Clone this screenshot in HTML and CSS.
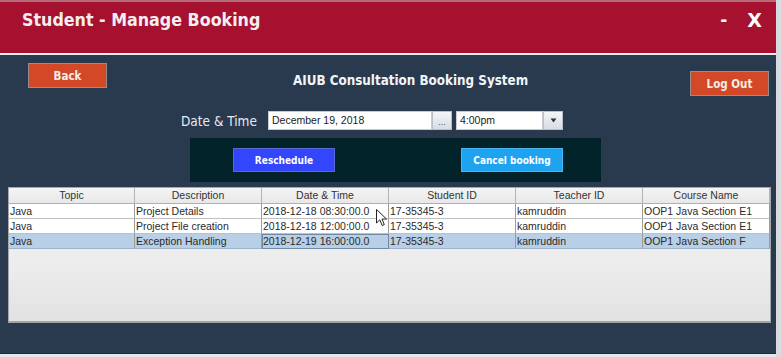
FILE: index.html
```html
<!DOCTYPE html>
<html>
<head>
<meta charset="utf-8">
<link rel="stylesheet" href="styles.css">
</head>
<body>
<div class="window">
  <header class="titlebar">
    <h1 class="app-title">Student - Manage Booking</h1>
    <div class="win-controls">
      <span class="win-min">-</span>
      <span class="win-close">X</span>
    </div>
  </header>
  <main class="content">
    <div class="top-row">
      <button class="btn btn-orange btn-back">Back</button>
      <h2 class="sys-title">AIUB Consultation Booking System</h2>
      <button class="btn btn-orange btn-logout">Log Out</button>
    </div>
    <div class="date-row">
      <label class="date-label">Date &amp; Time</label>
      <div class="field date-field">December 19, 2018</div>
      <div class="mini-btn dots">...</div>
      <div class="field time-field">4:00pm</div>
      <div class="mini-btn arrow">
        <svg width="7" height="5" viewBox="0 0 7 5"><path d="M0.5 0.5 L6.5 0.5 L3.5 4.5 Z" fill="#333"/></svg>
      </div>
    </div>
    <div class="action-panel">
      <button class="btn btn-blue">Reschedule</button>
      <button class="btn btn-sky">Cancel booking</button>
    </div>
    <div class="table-wrap">
      <div class="grid-table">
        <div class="th">Topic</div><div class="th">Description</div><div class="th">Date &amp; Time</div><div class="th">Student ID</div><div class="th">Teacher ID</div><div class="th">Course Name</div>
        <div class="td">Java</div><div class="td">Project Details</div><div class="td">2018-12-18 08:30:00.0</div><div class="td">17-35345-3</div><div class="td">kamruddin</div><div class="td">OOP1 Java Section E1</div>
        <div class="td">Java</div><div class="td">Project File creation</div><div class="td">2018-12-18 12:00:00.0</div><div class="td">17-35345-3</div><div class="td">kamruddin</div><div class="td">OOP1 Java Section E1</div>
        <div class="td sel">Java</div><div class="td sel">Exception Handling</div><div class="td sel focus">2018-12-19 16:00:00.0</div><div class="td sel">17-35345-3</div><div class="td sel">kamruddin</div><div class="td sel">OOP1 Java Section F</div>
      </div>
      <svg class="cursor" width="12" height="18" viewBox="0 0 12 18"><path d="M0.5 0.5 L0.5 14 L3.8 10.8 L6.2 16.5 L8.3 15.6 L6 10 L10.5 10 Z" fill="#fff" stroke="#222" stroke-width="1"/></svg>
    </div>
  </main>
  <div class="bottom-line"></div>
</div>
</body>
</html>
```

FILE: styles.css
```css
* { box-sizing: border-box; }
html, body { margin: 0; padding: 0; }
body {
  width: 781px;
  height: 357px;
  overflow: hidden;
  background: #d8dbe0;
  font-family: "Liberation Sans", Arial, sans-serif;
}
.window {
  width: 776px;
  height: 357px;
  display: flex;
  flex-direction: column;
  background: #293a4f;
}
.titlebar {
  height: 55px;
  flex: none;
  background: #a5112f;
  border-top: 2px solid #b56a7a;
  border-bottom: 2px solid #f2eef0;
  display: flex;
  align-items: flex-start;
  justify-content: space-between;
}
.app-title {
  margin: 8px 0 0 22px;
  font-family: "DejaVu Sans Condensed", "DejaVu Sans", Verdana, sans-serif;
  font-stretch: condensed;
  font-weight: bold;
  font-size: 17.7px;
  color: #f4eef2;
}
.win-controls {
  display: flex;
  gap: 20px;
  margin: 7px 14px 0 0;
  font-family: "DejaVu Sans", Verdana, sans-serif;
  font-weight: bold;
  font-size: 19px;
  color: #fff;
}
.win-min { font-size: 17px; margin-top: 1px; }
.content {
  flex: 1;
  display: flex;
  flex-direction: column;
  position: relative;
}
.top-row {
  display: flex;
  align-items: flex-start;
  height: 56px;
}
.btn {
  border: 1px solid #9a8c8c;
  font-family: "DejaVu Sans Condensed", "DejaVu Sans", Verdana, sans-serif;
  font-stretch: condensed;
  font-weight: bold;
  color: #fff;
  font-size: 11px;
  padding: 0;
  cursor: default;
}
.btn-orange {
  width: 79px;
  height: 25px;
  background: #d34826;
  color: #f6ece6;
  font-size: 11.5px;
}
.btn-back { margin: 8px 0 0 28px; }
.btn-logout { margin: 16px 7px 0 auto; }
.sys-title {
  margin: 18px 0 0 186px;
  font-family: "DejaVu Sans Condensed", "DejaVu Sans", Verdana, sans-serif;
  font-stretch: condensed;
  font-weight: bold;
  font-size: 13.3px;
  color: #f2f4f6;
}
.date-row {
  display: flex;
  align-items: center;
  height: 19px;
  padding-left: 181px;
}
.date-label {
  width: 87px;
  font-family: "DejaVu Sans Condensed", "DejaVu Sans", Verdana, sans-serif;
  font-stretch: condensed;
  font-size: 13.5px;
  color: #e6ebf0;
}
.field {
  height: 19px;
  background: #fff;
  border: 1px solid #c8ccd2;
  font-size: 10.5px;
  color: #222;
  padding: 2px 0 0 3px;
}
.date-field { width: 164px; }
.time-field { width: 87px; margin-left: 4px; }
.mini-btn {
  width: 20px;
  height: 19px;
  background: linear-gradient(#f4f6f8, #d7dde4);
  border: 1px solid #b8c0c8;
  display: flex;
  align-items: center;
  justify-content: center;
  font-size: 9px;
  color: #444;
}
.dots { line-height: 1; padding-top: 3px; }
.action-panel {
  margin: 8px 0 0 190px;
  width: 411px;
  height: 44px;
  background: #03232b;
  display: flex;
  align-items: center;
  padding-left: 43px;
}
.btn-blue {
  width: 102px;
  height: 24px;
  background: #3346fb;
  border-color: #5a6ad0;
  font-size: 10px;
}
.btn-sky {
  width: 102px;
  height: 24px;
  margin-left: 126px;
  background: #1ea3f0;
  border-color: #4cb6ee;
  font-size: 10px;
}
.table-wrap {
  position: relative;
  margin: 5px 0 0 8px;
  width: 763px;
  height: 136px;
  border: 1px solid #a4a8ae;
  border-bottom: 2px solid #9ea4ab;
  background: linear-gradient(#f0f0f0, #ececec 60%, #e2e2e2);
}
.grid-table {
  display: grid;
  grid-template-columns: 126px 127px 127px 127px 127px 127px;
  grid-template-rows: 16px;
  grid-auto-rows: 15px;
  font-size: 10.5px;
  color: #2a2a2a;
}
.th {
  background: linear-gradient(#f4f4f4, #e8e8e8);
  border-right: 1px solid #b4b4b4;
  border-bottom: 1px solid #b0b0b0;
  text-align: center;
  line-height: 15px;
  color: #333;
}
.td {
  background: #fff;
  border-right: 1px solid #9c9c9c;
  border-bottom: 1px solid #c0c0c0;
  line-height: 15px;
  padding-left: 1px;
  white-space: nowrap;
  overflow: hidden;
}
.td.sel {
  background: #b9cfe6;
  border-bottom-color: #9bb4cc;
}
.td.focus {
  outline: 1px solid #6f8aa6;
  outline-offset: -1px;
}
.cursor {
  position: absolute;
  left: 367px;
  top: 21px;
}
.bottom-line {
  height: 4px;
  flex: none;
  background: #e4e6ea;
  border-top: 1px solid #1d2a3a;
}
```
